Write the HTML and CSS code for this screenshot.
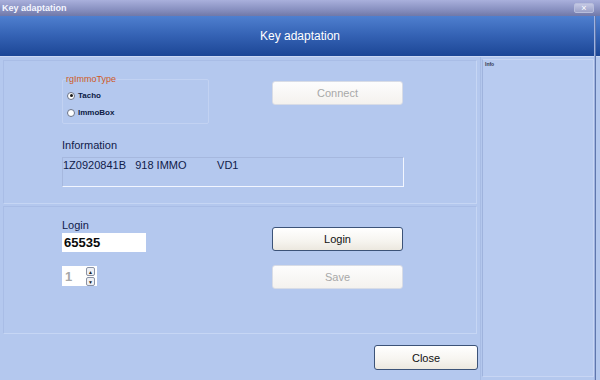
FILE: index.html
```html
<!doctype html>
<html lang="en">
<head>
<meta charset="UTF-8">
<title>Key adaptation</title>
<link rel="stylesheet" href="styles.css">
</head>
<body>
	<div class="titlebar">
		<span class="wintitle">Key adaptation</span>
		<span class="winclose">&#215;</span>
	</div>
	<header class="banner">Key adaptation</header>

	<div class="main">
		<div class="left">
			<div class="section sec1">
				<div class="toprow">
					<fieldset class="groupbox">
						<legend>rgImmoType</legend>
						<label class="radio"><span class="dot checked"></span>Tacho</label>
						<label class="radio"><span class="dot"></span>ImmoBox</label>
					</fieldset>
					<button class="btn disabled connect">Connect</button>
				</div>
				<div class="infolabel">Information</div>
				<div class="infobox">1Z0920841B   918 IMMO          VD1</div>
			</div>

			<div class="section sec2">
				<div class="logincol">
					<div class="loginlabel">Login</div>
					<div class="loginfield">65535</div>
				</div>
				<button class="btn loginbtn">Login</button>
				<div class="spinner">
					<span class="spinval">1</span>
					<span class="spinbtns"><i>&#9650;</i><i>&#9660;</i></span>
				</div>
				<button class="btn disabled">Save</button>
			</div>

			<div class="footer">
				<button class="btn closebtn">Close</button>
			</div>
		</div>

		<div class="infopanel">
			<div class="infopane"><span class="infotag">Info</span></div>
		</div>
		<div class="edge"></div>
	</div>
</body>
</html>
```

FILE: styles.css
```css
*{
	box-sizing: border-box;
}
body{
	margin: 0;
	width: 600px;
	height: 380px;
	overflow: hidden;
	background-color: #b4c8ee;
	font-family: "Liberation Sans", Arial, sans-serif;
	color: #10204a;
}

/* window title bar */
.titlebar{
	height: 16px;
	display: flex;
	align-items: center;
	justify-content: space-between;
	background: linear-gradient(#a9b0dc, #8890c0 60%, #7078a8);
	padding: 0 6px 0 2px;
}
.wintitle{
	color: #f4f6ff;
	font-weight: bold;
	font-size: 9px;
}
.winclose{
	width: 20px;
	height: 10px;
	line-height: 9px;
	text-align: center;
	font-size: 9px;
	color: #ffffff;
	background: linear-gradient(#c4c8e4, #9ca2c8);
	border: 1px solid #b8bedc;
	border-radius: 2px;
}

.banner{
	height: 41px;
	line-height: 40px;
	text-align: center;
	color: #ffffff;
	font-size: 12px;
	background: linear-gradient(#4f7fcf, #3664b6 45%, #1c4696);
	border-bottom: 1px solid #cbd8f4;
}

.main{
	display: flex;
	height: 323px;
}
.left{
	width: 480px;
	padding: 3px 3px 0 3px;
}

.section{
	border: 1px solid #c2d3f2;
	border-color: #a9bde6 #c6d6f4 #c6d6f4 #a9bde6;
}
.sec1{
	height: 144px;
	padding: 14px 0 0 58px;
}
.toprow{
	display: flex;
	align-items: flex-start;
}
.groupbox{
	width: 147px;
	height: 49px;
	margin: 0;
	padding: 0 0 0 4px;
	border: 1px solid #c2d2f2;
	border-radius: 2px;
}
.groupbox legend{
	padding: 0;
	margin-left: -1px;
	font-size: 9px;
	color: #cf5a26;
	line-height: 8px;
}
.radio{
	display: flex;
	align-items: center;
	gap: 3px;
	height: 9px;
	margin-top: 8px;
	margin-bottom: 1px;
	font-size: 8px;
	font-weight: bold;
	color: #0c1a44;
}
.dot{
	width: 8px;
	height: 8px;
	border-radius: 50%;
	background-color: #ffffff;
	border: 1px solid #6a7388;
	display: flex;
	align-items: center;
	justify-content: center;
}
.dot.checked::after{
	content: "";
	width: 3px;
	height: 3px;
	border-radius: 50%;
	background-color: #1a1a1a;
}

.btn{
	width: 131px;
	height: 24px;
	font-family: "Liberation Sans", Arial, sans-serif;
	font-size: 11px;
	color: #101010;
	background: linear-gradient(#ffffff, #f6f4ef 60%, #ece8df);
	border: 1px solid #3c5378;
	border-radius: 3px;
	padding: 0;
}
.btn.disabled{
	color: #a8a8a8;
	border-color: #d8dce6;
	background: linear-gradient(#fdfdfd, #f4f2ee);
}
.connect{
	margin: 6px 0 0 63px;
}

.infolabel{
	margin-top: 15px;
	font-size: 11px;
	line-height: 13px;
	color: #10204a;
}
.infobox{
	width: 342px;
	height: 30px;
	margin-top: 5px;
	padding: 1px 0 0 0;
	white-space: pre;
	font-size: 11px;
	border: 1px solid #a6b8de;
	border-color: #a6b8de #f2f6ff #f2f6ff #a6b8de;
	color: #10204a;
}

.sec2{
	height: 128px;
	margin-top: 2px;
	padding: 12px 0 0 58px;
	display: grid;
	grid-template-columns: 210px 131px;
	grid-template-rows: 33px 24px;
	row-gap: 13px;
	align-items: start;
}
.loginlabel{
	font-size: 11px;
	line-height: 13px;
	color: #10204a;
}
.loginfield{
	width: 84px;
	height: 19px;
	margin-top: 1px;
	padding-left: 2px;
	background-color: #ffffff;
	font-size: 13px;
	font-weight: bold;
	line-height: 19px;
	color: #0a0a0a;
}
.loginbtn{
	margin-top: 8px;
}
.spinner{
	width: 35px;
	height: 20px;
	margin-top: 1px;
	display: flex;
	align-items: center;
	justify-content: space-between;
	padding: 0 2px 0 3px;
	background-color: #ffffff;
}
.spinval{
	font-size: 13px;
	font-weight: bold;
	color: #a8a8a8;
}
.spinbtns{
	display: flex;
	flex-direction: column;
	gap: 1px;
}
.spinbtns i{
	font-style: normal;
	width: 9px;
	height: 9px;
	font-size: 5px;
	line-height: 8px;
	text-align: center;
	color: #202020;
	background: #eef0f4;
	border: 1px solid #8a92a4;
	border-radius: 2px;
}

.footer{
	display: flex;
	justify-content: flex-end;
	padding-top: 11px;
	padding-right: 0;
}
.closebtn{
	width: 104px;
	height: 25px;
	margin-right: -1px;
}

.infopanel{
	width: 114px;
	padding: 2px 0 3px 1px;
	border-left: 1px solid #a8bce4;
}
.infopane{
	height: 100%;
	background-color: #b8cbf0;
	border: 1px solid #c8d6f4;
	border-left-color: #9fb3dd;
	padding: 1px 2px;
}
.infotag{
	display: block;
	font-size: 5px;
	font-weight: bold;
	color: #303850;
}
.edge{
	width: 2px;
	background: linear-gradient(90deg, #7088b8, #4d64a0);
	margin-top: -41px;
	border-left: 1px solid #9fb3e0;
}
```
